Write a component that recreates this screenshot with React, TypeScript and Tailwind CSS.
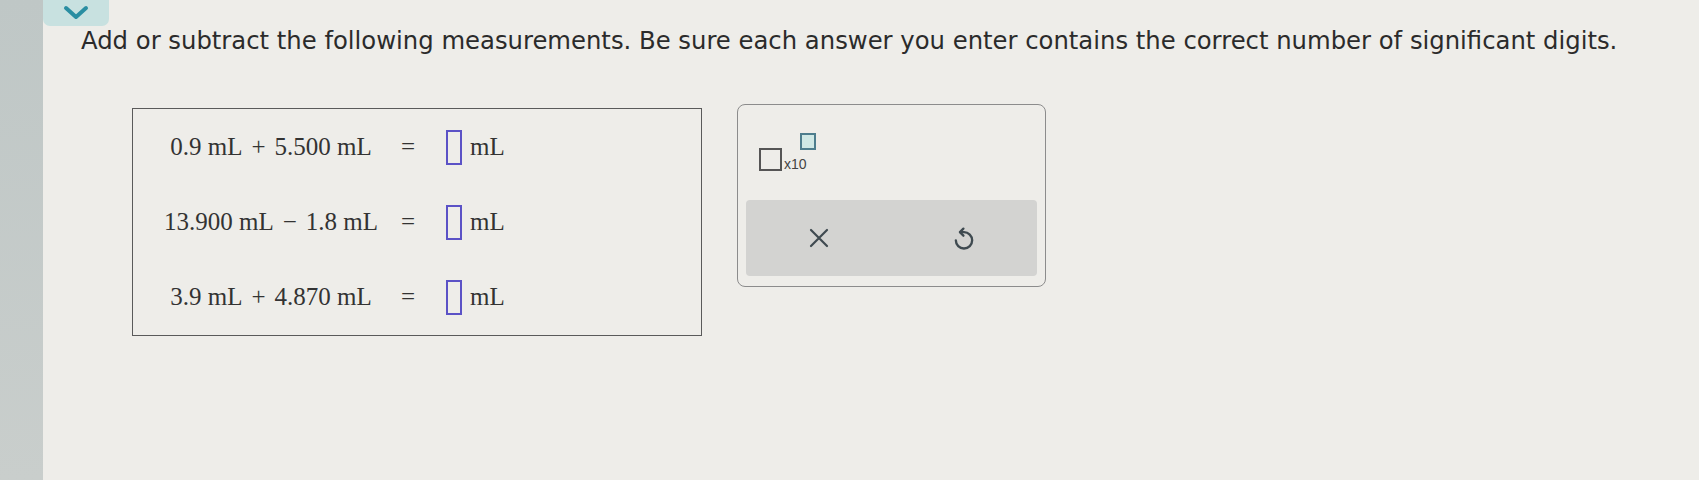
import React from "react";

const rows = [
  { left: "0.9 mL", op: "+", right: "5.500 mL" },
  { left: "13.900 mL", op: "\u2212", right: "1.8 mL" },
  { left: "3.9 mL", op: "+", right: "4.870 mL" },
];

function EquationRow({ left, op, right }: { left: string; op: string; right: string }) {
  return (
    <div className="flex h-[40px] items-center">
      <div className="ml-[28px] w-[220px] whitespace-nowrap text-center">
        {left}
        <span className="px-[9px]">{op}</span>
        {right}
      </div>
      <div className="w-[54px] text-center">=</div>
      <div className="ml-[11px] h-[35px] w-[16px] border-2 border-[#5b52c6]" />
      <div className="ml-[8px]">mL</div>
    </div>
  );
}

function UndoIcon() {
  return (
    <svg width="28" height="28" viewBox="0 0 24 24" fill="none" stroke="#3f4a50" strokeWidth="2" strokeLinecap="round" strokeLinejoin="round">
      <path d="M9 7h3a7 7 0 1 1-7 7" />
      <path d="M11.5 4 8.5 7l3 3" />
    </svg>
  );
}

function CloseIcon() {
  return (
    <svg width="24" height="24" viewBox="0 0 24 24" fill="none" stroke="#3f4a50" strokeWidth="2.2" strokeLinecap="round">
      <path d="M4 4l16 16M20 4 4 20" />
    </svg>
  );
}

export default function App() {
  return (
    <div className="flex h-[480px] w-[1699px] overflow-hidden bg-[#eeede9]">
      <div className="w-[43px] shrink-0 bg-gradient-to-b from-[#bfc7c6] to-[#c9cecc]" />

      <div className="flex-1">
        <button className="flex h-[26px] w-[66px] items-center justify-center rounded-b-[7px] bg-[#c8e1e0]">
          <svg width="28" height="16" viewBox="0 0 28 16" fill="none" stroke="#2a8ea2" strokeWidth="4" strokeLinecap="round" strokeLinejoin="round">
            <path d="M4 3l10 9 10-9" />
          </svg>
        </button>

        <p className="ml-[38px] mt-[1px] whitespace-nowrap font-['DejaVu_Sans',sans-serif] text-[24.3px] leading-[28px] text-[#2b2b2b]">
          Add or subtract the following measurements. Be sure each answer you enter contains the correct number of significant digits.
        </p>

        <div className="ml-[89px] mt-[49px] flex items-start gap-[35px]">
          <div className="mt-[4px] flex h-[228px] w-[570px] flex-col gap-[35px] border border-[#5a5a5a] pt-[18px] font-['Liberation_Serif',serif] text-[25px] text-[#333]">
            {rows.map((r) => (
              <EquationRow key={r.left} {...r} />
            ))}
          </div>

          <div className="flex h-[183px] w-[309px] flex-col rounded-[8px] border-[1.5px] border-[#8c8c8c] px-[8px] pb-[10px]">
            <div className="ml-[13px] mt-[43px] flex items-end">
              <div className="h-[23px] w-[23px] border-2 border-[#555]" />
              <div className="relative ml-[2px] font-['Liberation_Sans',sans-serif] text-[14px] leading-[14px] text-[#444]">
                x10
                <div className="absolute left-[16px] top-[-24px] h-[17px] w-[16px] border-2 border-[#4d7d8d] bg-[#cfe8e5]" />
              </div>
            </div>
            <div className="mt-auto flex h-[76px] rounded-[4px] bg-[#d3d3d1]">
              <div className="flex flex-1 items-center justify-center">
                <CloseIcon />
              </div>
              <div className="flex flex-1 items-center justify-center">
                <UndoIcon />
              </div>
            </div>
          </div>
        </div>
      </div>
    </div>
  );
}
